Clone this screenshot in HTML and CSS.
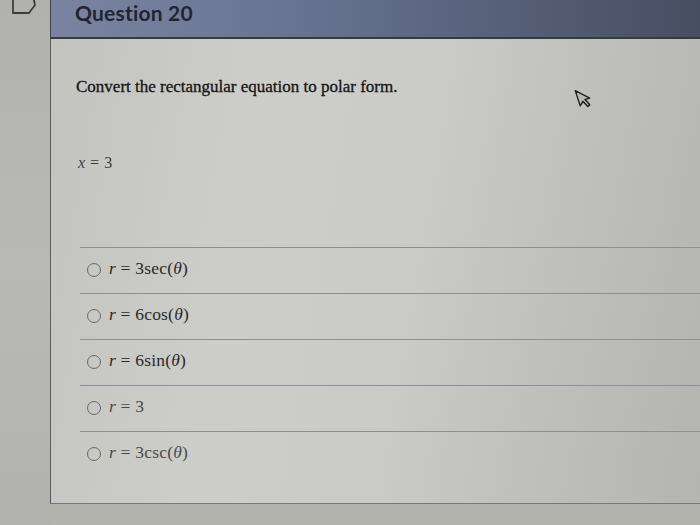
FILE: index.html
```html
<!DOCTYPE html>
<html>
<head>
<meta charset="utf-8">
<link rel="stylesheet" href="styles.css">
</head>
<body>
<div class="page">
  <aside class="gutter">
    <svg class="flag" width="30" height="18" viewBox="0 0 30 18">
      <path d="M2 -4 V13 H18 L24 5 L22 -4" fill="none" stroke="#3d3d3d" stroke-width="1.8" stroke-linejoin="round"/>
    </svg>
  </aside>
  <main class="main">
    <header class="header">
      <h1 class="title">Question 20</h1>
    </header>
    <section class="panel">
      <p class="prompt">Convert the rectangular equation to polar form.</p>
      <p class="given"><i>x</i> = 3</p>
      <ul class="options">
        <li class="option"><span class="radio"></span><span class="math"><i>r</i> = 3sec(<i>θ</i>)</span></li>
        <li class="option"><span class="radio"></span><span class="math"><i>r</i> = 6cos(<i>θ</i>)</span></li>
        <li class="option"><span class="radio"></span><span class="math"><i>r</i> = 6sin(<i>θ</i>)</span></li>
        <li class="option"><span class="radio"></span><span class="math light"><i>r</i> = 3</span></li>
        <li class="option"><span class="radio"></span><span class="math light"><i>r</i> = 3csc(<i>θ</i>)</span></li>
      </ul>
    </section>
    <div class="below"></div>
  </main>
  <svg class="cursor" width="18" height="24" viewBox="0 0 18 24">
    <path d="M2 2 L2 18 L6 14.5 L9 21 L11.5 20 L8.5 13.5 L13.5 13.5 Z" fill="#b9b9b6" stroke="#1f1f1f" stroke-width="1.4" stroke-linejoin="round"/>
  </svg>
</div>
</body>
</html>
```

FILE: styles.css
```css
html, body {
  margin: 0;
  padding: 0;
}
body {
  width: 700px;
  height: 525px;
  overflow: hidden;
  background: #b3b4af;
}
.page {
  position: relative;
  display: flex;
  width: 700px;
  height: 525px;
}
.gutter {
  width: 50px;
  flex: none;
  background: linear-gradient(180deg, #b1b2ad 0%, #b9bab6 50%, #b2b3ae 100%);
}
.flag {
  display: block;
  margin: 0 0 0 11px;
}
.main {
  flex: 1;
  display: flex;
  flex-direction: column;
}
.header {
  height: 37px;
  border-bottom: 2px solid #353a48;
  border-left: 1px solid #3f4350;
  background: linear-gradient(90deg, #7a84a2 0%, #6a7594 35%, #566078 70%, #484e62 100%);
}
.title {
  margin: 0 0 0 24px;
  font-family: Lato, "Open Sans", sans-serif;
  font-weight: 700;
  font-size: 21px;
  line-height: 26px;
  color: #23252e;
  letter-spacing: 0.2px;
}
.panel {
  height: 464px;
  border-left: 1px solid #5a5a5a;
  border-bottom: 1px solid #77787a;
  background: linear-gradient(100deg, #c3c3c0 0%, #cdcdca 30%, #cacac7 55%, #bdbdb9 80%, #b4b4b0 100%);
}
.prompt {
  margin: 38px 0 0 25px;
  font-family: "Liberation Serif", serif;
  font-size: 17px;
  line-height: 20px;
  color: #141414;
  -webkit-text-stroke: 0.3px #141414;
}
.given {
  margin: 56px 0 0 27px;
  font-family: "Liberation Serif", serif;
  font-size: 16px;
  line-height: 20px;
  color: #3e3e3e;
  letter-spacing: 0.5px;
}
.options {
  list-style: none;
  margin: 74px 0 0 29px;
  padding: 0;
}
.option {
  display: flex;
  align-items: center;
  gap: 8px;
  height: 46px;
  border-top: 1px solid #8e8f96;
  padding-left: 7px;
  padding-bottom: 4px;
  box-sizing: border-box;
}
.radio {
  width: 12px;
  height: 12px;
  border: 1.6px solid #6a6a6a;
  border-radius: 50%;
  flex: none;
  margin-top: 2px;
}
.math {
  font-family: "Liberation Serif", serif;
  font-size: 17.5px;
  color: #2a2a2a;
  letter-spacing: 0.2px;
}
.math.light {
  color: #4a4a4a;
}
.math i {
  font-style: italic;
}
.below {
  flex: 1;
  background: #b4b4af;
}
.cursor {
  position: absolute;
  left: 576px;
  top: 86px;
  transform: rotate(-18deg);
}
```
